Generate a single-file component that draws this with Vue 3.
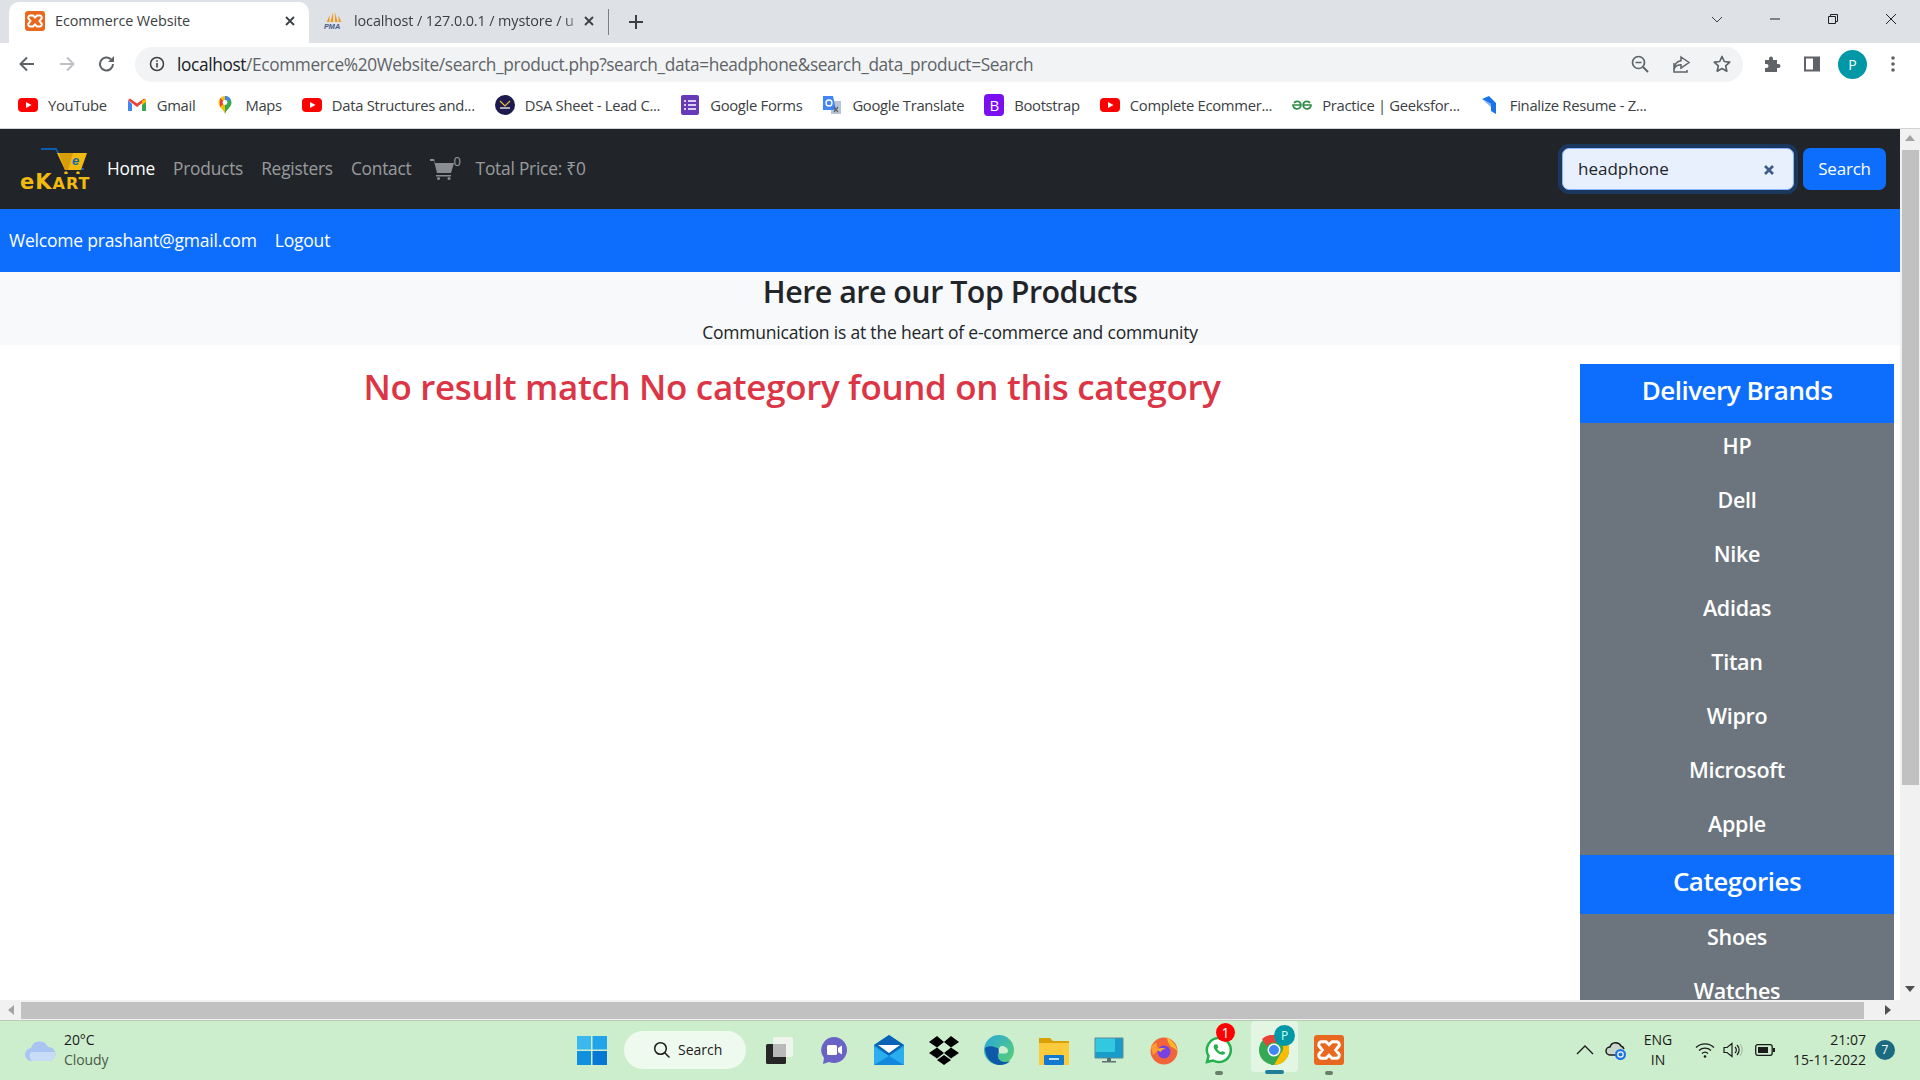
<script setup>
const brands = ['HP', 'Dell', 'Nike', 'Adidas', 'Titan', 'Wipro', 'Microsoft', 'Apple']
const categories = ['Shoes', 'Watches']
const bookmarks = [
  { icon: 'yt', label: 'YouTube' },
  { icon: 'gmail', label: 'Gmail' },
  { icon: 'maps', label: 'Maps' },
  { icon: 'yt', label: 'Data Structures and...' },
  { icon: 'dsa', label: 'DSA Sheet - Lead C...' },
  { icon: 'forms', label: 'Google Forms' },
  { icon: 'translate', label: 'Google Translate' },
  { icon: 'bs', label: 'Bootstrap' },
  { icon: 'yt', label: 'Complete Ecommer...' },
  { icon: 'gfg', label: 'Practice | Geeksfor...' },
  { icon: 'resume', label: 'Finalize Resume - Z...' }
]
const navLinks = ['Products', 'Registers', 'Contact']
</script>

<template>
  <div class="screen">
    <div class="tabstrip">
      <div class="tab active">
        <svg class="fav" viewBox="0 0 20 20"><rect width="20" height="20" rx="3" fill="#e8681f"/><path d="M5 4.5h3l2 2 2-2h3a2 2 0 0 1 1 3.6L14.5 10l1.500 1.900a2 2 0 0 1-1 3.600h-3l-2-2-2 2H5a2 2 0 0 1-1-3.600L5.500 10 4 8.100A2 2 0 0 1 5 4.500z" fill="none" stroke="#fff" stroke-width="2"/></svg>
        <span class="tab-title">Ecommerce Website</span>
        <svg class="tab-x" viewBox="0 0 12 12"><path d="M2 2l8 8M10 2l-8 8" stroke="#3c4043" stroke-width="1.800"/></svg>
      </div>
      <div class="tab inactive">
        <svg class="fav" viewBox="0 0 22 22"><path d="M10 1 7 12h3zM12 1l3 11h-3zM6 5 3 12h3zM16 5l3 7h-3z" fill="#f29a1f"/><text x="0" y="20" font-size="8" font-style="italic" font-weight="700" fill="#4a5a8a" font-family="Liberation Sans">PMA</text></svg>
        <span class="tab-title faded">localhost / 127.0.0.1 / mystore / u</span>
        <svg class="tab-x" viewBox="0 0 12 12"><path d="M2 2l8 8M10 2l-8 8" stroke="#3c4043" stroke-width="1.800"/></svg>
      </div>
      <div class="tab-sep"></div>
      <svg class="plus" viewBox="0 0 16 16"><path d="M8 1v14M1 8h14" stroke="#3c4043" stroke-width="2"/></svg>
      <div class="win-controls">
        <svg class="win" viewBox="0 0 12 12"><path d="M1 4l5 5 5-5" fill="none" stroke="#3c4043"/></svg>
        <svg class="win" viewBox="0 0 12 12"><path d="M1 6h10" stroke="#202124" stroke-width="1"/></svg>
        <svg class="win" viewBox="0 0 12 12"><path d="M1.500 3.500h7v7h-7zM3.500 3.500v-2h7v7h-2" fill="none" stroke="#202124"/></svg>
        <svg class="win" viewBox="0 0 12 12"><path d="M1 1l10 10M11 1 1 11" stroke="#202124"/></svg>
      </div>
    </div>

    <div class="toolbar">
      <svg class="tb back" viewBox="0 0 20 20"><path d="M17 10H4M10 3.500 3.500 10l6.500 6.500" fill="none" stroke="#5f6368" stroke-width="2"/></svg>
      <svg class="tb fwd" viewBox="0 0 20 20"><path d="M3 10h13M10 3.500l6.500 6.500-6.500 6.500" fill="none" stroke="#bdc1c6" stroke-width="2"/></svg>
      <svg class="tb" viewBox="0 0 20 20"><path d="M16 10a6.500 6.500 0 1 1-2-4.700" fill="none" stroke="#5f6368" stroke-width="2"/><path d="M17 2v6h-6z" fill="#5f6368"/></svg>
      <div class="omnibox">
        <svg class="info" viewBox="0 0 16 16"><circle cx="8" cy="8" r="6.500" fill="none" stroke="#3c4043" stroke-width="1.500"/><path d="M8 7v4.500M8 4.300v1.500" stroke="#3c4043" stroke-width="1.600"/></svg>
        <div class="url"><span class="host">localhost</span>/Ecommerce%20Website/search_product.php?search_data=headphone&amp;search_data_product=Search</div>
        <div class="omni-actions">
          <svg class="om" viewBox="0 0 20 20"><circle cx="8.500" cy="8.500" r="6" fill="none" stroke="#5f6368" stroke-width="1.700"/><path d="M13 13l5 5" stroke="#5f6368" stroke-width="2"/><path d="M5.500 8.500h6" stroke="#5f6368" stroke-width="1.500"/></svg>
          <svg class="om" viewBox="0 0 20 20"><path d="M10 3v0l8 5.500-8 5.500v-3.200c-3 0-5 1-6.500 3.200.3-4 2.700-6.800 6.500-7.300z" fill="none" stroke="#5f6368" stroke-width="1.500"/><path d="M3 9v9h13v-2" fill="none" stroke="#5f6368" stroke-width="1.500"/></svg>
          <svg class="om" viewBox="0 0 20 20"><path d="M10 2.500l2.300 5 5.400.6-4 3.700 1.100 5.400L10 14.500l-4.800 2.700 1.100-5.400-4-3.700 5.400-.6z" fill="none" stroke="#5f6368" stroke-width="1.700" stroke-linejoin="round"/></svg>
        </div>
      </div>
      <div class="ext-actions">
        <svg class="om" viewBox="0 0 20 20"><path d="M3 6h4V4.500a2 2 0 0 1 4 0V6h4v4h1.500a2 2 0 0 1 0 4H15v4H3v-4h1.500a2 2 0 0 0 0-4H3z" fill="#5f6368"/></svg>
        <svg class="om" viewBox="0 0 20 20"><path d="M3 3.500h14v13H3z" fill="none" stroke="#5f6368" stroke-width="2"/><path d="M11 4h6v12h-6z" fill="#5f6368"/></svg>
        <div class="avatar">P</div>
        <svg class="om" viewBox="0 0 20 20"><circle cx="10" cy="4" r="1.800" fill="#5f6368"/><circle cx="10" cy="10" r="1.800" fill="#5f6368"/><circle cx="10" cy="16" r="1.800" fill="#5f6368"/></svg>
      </div>
    </div>

    <div class="bookmarks">
      <div v-for="b in bookmarks" :key="b.label" class="bookmark">
        <svg v-if="b.icon === 'yt'" class="bm-ic" viewBox="0 0 20 20"><rect x="0" y="3" width="20" height="14" rx="4" fill="#f00"/><path d="M8 7l5.500 3L8 13z" fill="#fff"/></svg>
        <svg v-else-if="b.icon === 'gmail'" class="bm-ic" viewBox="0 0 20 20"><path d="M1 5v11h4V9z" fill="#4285f4"/><path d="M19 5v11h-4V9z" fill="#34a853"/><path d="M1 5l9 7 9-7-2-1.500-7 5-7-5z" fill="#ea4335"/><path d="M15 5.500 19 4v3l-4 3z" fill="#fbbc04"/></svg>
        <svg v-else-if="b.icon === 'maps'" class="bm-ic" viewBox="0 0 20 20"><path d="M10 1a6.500 6.500 0 0 0-6.500 6.500c0 4.500 4.500 6 6.500 11.500z" fill="#fbbc04"/><path d="M10 1a6.500 6.500 0 0 1 6.500 6.500c0 4.500-4.500 6-6.500 11.500z" fill="#34a853"/><path d="M5 3 10 7.500 5 12z" fill="#ea4335"/><path d="M10 1a6.500 6.500 0 0 1 5.500 3L10 7.500z" fill="#4285f4"/><circle cx="10" cy="7.500" r="2.400" fill="#fff"/></svg>
        <svg v-else-if="b.icon === 'dsa'" class="bm-ic" viewBox="0 0 20 20"><circle cx="10" cy="10" r="10" fill="#1e1a4e"/><path d="M5 6l5 5 5-5" fill="none" stroke="#f0c040" stroke-width="1.200"/><path d="M5 13h10" stroke="#ddd" stroke-width="1.500"/></svg>
        <svg v-else-if="b.icon === 'forms'" class="bm-ic" viewBox="0 0 20 20"><rect x="1" y="0" width="18" height="20" rx="2" fill="#673ab7"/><path d="M8 6h8M8 10h8M8 14h8M4 6h2M4 10h2M4 14h2" stroke="#fff" stroke-width="1.500"/></svg>
        <svg v-else-if="b.icon === 'translate'" class="bm-ic" viewBox="0 0 20 20"><path d="M9 6h10v13H9z" fill="#b9c4d6"/><path d="M1 1h10l3 14H1z" fill="#4285f4"/><circle cx="7" cy="8" r="3" fill="none" stroke="#fff" stroke-width="1.400"/><path d="M12 12l4 5M16 12l-4 5" stroke="#5f6368" stroke-width="1.300"/></svg>
        <div v-else-if="b.icon === 'bs'" class="bs-ic">B</div>
        <svg v-else-if="b.icon === 'gfg'" class="bm-ic" viewBox="0 0 20 20"><path d="M9 10H1a4 4 0 0 0 7 2.500c1-1.300 1-3.500 0-5A4 4 0 0 0 2 8M11 10h8a4 4 0 0 1-7 2.500c-1-1.300-1-3.500 0-5A4 4 0 0 1 18 8" fill="none" stroke="#2f8d46" stroke-width="1.700"/></svg>
        <svg v-else class="bm-ic" viewBox="0 0 20 20"><path d="M2 4l7-3 7 7v11l-5-3V9z" fill="#1a73e8"/><path d="M2 4l9 5v3z" fill="#7cb3f5"/></svg>
        <span class="bm-label">{{ b.label }}</span>
      </div>
    </div>

    <div class="viewport">
      <div class="page">
        <nav class="navbar">
          <div class="logo">
            <svg class="logo-cart" viewBox="0 0 46 26"><path d="M0 1h15l10 20h18" fill="none" stroke="#0b5cab" stroke-width="1.800"/><path d="M16 5h30l-6 17H24z" fill="#f2b90f"/><path d="M18 5h14l-5 17h-3z" fill="#d79c08"/><text x="31" y="17" font-size="13" font-weight="700" font-style="italic" fill="#0f6ab0" font-family="Liberation Sans">e</text><circle cx="25" cy="25" r="1.800" fill="#f2b90f"/><circle cx="37" cy="25" r="1.800" fill="#f2b90f"/></svg>
            <div class="logo-text">eK<span class="logo-small">ART</span></div>
          </div>
          <a class="nav-link current">Home</a>
          <a v-for="l in navLinks" :key="l" class="nav-link">{{ l }}</a>
          <a class="nav-link cart">
            <svg class="cart-ic" viewBox="0 0 24 22"><path d="M0 1h4l1 4h19l-3 10H7L4 3H0z" fill="#8b8d90"/><path d="M6 17h15v1.500H6z" fill="#8b8d90"/><circle cx="8.500" cy="20.500" r="1.500" fill="#8b8d90"/><circle cx="19" cy="20.500" r="1.500" fill="#8b8d90"/></svg><sup>0</sup>
          </a>
          <a class="nav-link">Total Price: ₹0</a>
          <form class="search" @submit.prevent>
            <div class="search-box">
              <input class="search-input" type="text" value="headphone" readonly />
              <svg class="clear" viewBox="0 0 12 12"><path d="M2 2l8 8M10 2l-8 8" stroke="#3d5c8c" stroke-width="2.600"/></svg>
            </div>
            <button class="search-btn" type="button">Search</button>
          </form>
        </nav>

        <div class="welcome">
          <a>Welcome prashant@gmail.com</a>
          <a>Logout</a>
        </div>

        <div class="hero">
          <h3>Here are our Top Products</h3>
          <p>Communication is at the heart of e-commerce and community</p>
        </div>

        <div class="columns">
          <div class="results">
            <h2>No result match No category found on this category</h2>
          </div>
          <aside class="sidebar">
            <div class="side-head">Delivery Brands</div>
            <div v-for="b in brands" :key="b" class="side-item">{{ b }}</div>
            <div class="side-head">Categories</div>
            <div v-for="c in categories" :key="c" class="side-item">{{ c }}</div>
          </aside>
        </div>
      </div>
      <div class="vscroll">
        <div class="arrow up"></div>
        <div class="vthumb"></div>
        <div class="vspace"></div>
        <div class="arrow down"></div>
      </div>
    </div>

    <div class="hscroll">
      <div class="harrow"><div class="arrow left"></div></div>
      <div class="hthumb"></div>
      <div class="harrow wide"><div class="arrow right"></div></div>
      <div class="corner"></div>
    </div>

    <div class="taskbar">
      <div class="weather">
        <svg class="cloud" viewBox="0 0 32 26"><path d="M8 24a6.500 6.500 0 0 1-1-13 9 9 0 0 1 17-1 7 7 0 0 1 1 14z" fill="#a9c4f2"/><path d="M8 24a6.500 6.500 0 0 1-1-9h24a7 7 0 0 1-6 9z" fill="#c9dcf7"/></svg>
        <div class="weather-text">
          <div class="temp">20°C</div>
          <div class="cond">Cloudy</div>
        </div>
      </div>
      <div class="task-center">
        <svg class="ti win11" viewBox="0 0 30 30"><path d="M0 1h14v13.500H0z" fill="#3bb8f0"/><path d="M15.500 1H30v13.500H15.500z" fill="#22a4e8"/><path d="M0 16h14v14H0z" fill="#1190e0"/><path d="M15.500 16H30v14H15.500z" fill="#0678d4"/></svg>
        <div class="task-search">
          <svg class="ts-ic" viewBox="0 0 18 18"><circle cx="7.500" cy="7.500" r="5.800" fill="none" stroke="#1b1b1b" stroke-width="1.500"/><path d="M11.500 11.500l5 5" stroke="#1b1b1b" stroke-width="1.500"/></svg>
          <span>Search</span>
        </div>
        <svg class="ti taskview" viewBox="0 0 30 30"><rect x="2" y="9" width="20" height="20" rx="1.500" fill="#262626"/><rect x="9" y="2" width="20" height="20" rx="1.500" fill="#f2f6f2" opacity=".85"/><rect x="9" y="9" width="13" height="13" fill="#b9b9b9"/></svg>
        <svg class="ti" viewBox="0 0 30 30"><path d="M15 2a13 13 0 1 1-5 25l-6 2 1-6A13 13 0 0 1 15 2z" fill="#6a63c6"/><rect x="8" y="10" width="10" height="10" rx="1.500" fill="#fff"/><path d="M19 13l4-2.500v9L19 17z" fill="#fff"/></svg>
        <svg class="ti" viewBox="0 0 30 30"><path d="M0 10 15 0l15 10v20H0z" fill="#1b9de8"/><path d="M0 10 15 0l15 10-15 11z" fill="#0a63b5"/><path d="M4 10h22l-11 8z" fill="#fff"/><path d="M0 12l15 9 15-9v18H0z" fill="#2aaef0"/><path d="M0 30l15-9 15 9z" fill="#1287dc"/></svg>
        <svg class="ti" viewBox="0 0 30 30"><path d="M8 1 0 7l8 5.500L15 7zM22 1l-7 6 7 5.500L30 7zM0 18l8-5.500 7 5.500-7 5.500zM30 18l-8-5.500L15 18l7 5.500zM8 25l7-5 7 5-7 5z" fill="#000"/></svg>
        <svg class="ti" viewBox="0 0 30 30"><defs><linearGradient id="edgeA" x1="0" y1="0" x2="1" y2="1"><stop offset="0" stop-color="#2ba6dd"/><stop offset="1" stop-color="#59d36e"/></linearGradient></defs><circle cx="15" cy="15" r="15" fill="url(#edgeA)"/><path d="M1 13c0 10 7 17 15 17 4 0 8-1.500 10-4-5 2-11 1-12-4-.8-3.500 1-5 3-5.500C15 12 5 9 1 13z" fill="#0f5aa8"/><path d="M17 11c4 0 7 2 7 5 0 1.500-1.500 2.500-3 2.500h-6c-1-4 0-6 2-7.500z" fill="#cdeecd"/></svg>
        <svg class="ti" viewBox="0 0 30 30"><path d="M0 3h11l3 3h16v5H0z" fill="#d8a000"/><path d="M0 8h30v22H0z" fill="#fccb3c"/><rect x="5" y="20" width="20" height="10" rx="1" fill="#1279d0"/><path d="M10 24h10" stroke="#fff" stroke-width="1.500"/></svg>
        <svg class="ti" viewBox="0 0 30 30"><rect x="1" y="3" width="28" height="20" rx="1" fill="#1a9cc9"/><rect x="1" y="3" width="20" height="14" fill="#32c9e0"/><path d="M1 3h28v20H1z" fill="none" stroke="#5a8a9a"/><path d="M13 23h4v3h-4zM8 26h14v1.500H8z" fill="#5e6e72"/></svg>
        <svg class="ti" viewBox="0 0 30 30"><circle cx="15" cy="16" r="13.500" fill="#f2653a"/><path d="M18 2c4 3 10 8 10 14-2-2-4-4-6-4-2-3-4-6-4-10z" fill="#fcb92c"/><path d="M2 12c2-3 4-4 6-4-1 3 0 5 3 6L4 20z" fill="#ff9a30"/><circle cx="15" cy="17" r="6.500" fill="#7542e5"/><path d="M8 15c2-2 5-3 9-1-3 0-5 1-5 3z" fill="#ffb020"/></svg>
        <div class="ti-wrap">
          <svg class="ti" viewBox="0 0 30 30"><path d="M15 3a12 12 0 1 1-6 22.500L3 27l1.500-6A12 12 0 0 1 15 3z" fill="#fff" stroke="#22b14c" stroke-width="2.500"/><path d="M10.500 9.500c-1 1-1.500 3 .5 5.500 2 3 5 4.800 7.500 4.800 1.500 0 2.500-1 2.800-2.300l-3-1.500-1.300 1.300c-1.500-.5-3.300-2.300-3.800-3.800l1.200-1.300-1.400-3z" fill="#22b14c"/></svg>
          <div class="wa-badge">1</div>
          <div class="dot"></div>
        </div>
        <div class="ti-wrap active-app">
          <svg class="ti" viewBox="0 0 30 30"><circle cx="15" cy="15" r="15" fill="#34a853"/><path d="M15 0a15 15 0 0 1 13 7.500H15a7.500 7.500 0 0 0-7 4L3 4A15 15 0 0 1 15 0z" fill="#ea4335"/><path d="M28 7.500A15 15 0 0 1 15 30l7-12a7.500 7.500 0 0 0 0-10.500z" fill="#fbbc04"/><circle cx="15" cy="15" r="6.500" fill="#fff"/><circle cx="15" cy="15" r="5" fill="#4285f4"/></svg>
          <div class="chrome-badge">P</div>
          <div class="bar"></div>
        </div>
        <div class="ti-wrap">
          <svg class="ti" viewBox="0 0 20 20"><rect width="20" height="20" rx="2" fill="#e8681f"/><path d="M5 4.500h3l2 2 2-2h3a2 2 0 0 1 1 3.600L14.500 10l1.500 1.900a2 2 0 0 1-1 3.600h-3l-2-2-2 2H5a2 2 0 0 1-1-3.600L5.500 10 4 8.100A2 2 0 0 1 5 4.500z" fill="none" stroke="#fff" stroke-width="2"/></svg>
          <div class="dot"></div>
        </div>
      </div>
      <div class="tray">
        <svg class="chev" viewBox="0 0 18 10"><path d="M1 9l8-8 8 8" fill="none" stroke="#1b1b1b" stroke-width="1.300"/></svg>
        <svg class="od" viewBox="0 0 22 20"><path d="M5 15a4 4 0 0 1 0-8 6 6 0 0 1 11-1 4.500 4.500 0 0 1 3 3" fill="#c9d6c9" stroke="#1b1b1b" stroke-width="1.500"/><path d="M5 15h8" stroke="#1b1b1b" stroke-width="1.500"/><circle cx="15.500" cy="14.500" r="5.500" fill="#1a73e8"/><circle cx="15.500" cy="14.500" r="2.700" fill="none" stroke="#fff" stroke-width="1.200"/></svg>
        <div class="lang"><div>ENG</div><div>IN</div></div>
        <svg class="wifi" viewBox="0 0 20 16"><path d="M1 5.500a13 13 0 0 1 18 0M4 8.500a9 9 0 0 1 12 0M7 11.500a4.500 4.500 0 0 1 6 0" fill="none" stroke="#1b1b1b" stroke-width="1.300"/><circle cx="10" cy="14.500" r="1.300" fill="#1b1b1b"/></svg>
        <svg class="vol" viewBox="0 0 20 16"><path d="M1 5.500h3L9 1.500v13L4 10.500H1z" fill="none" stroke="#1b1b1b" stroke-width="1.200"/><path d="M12 5a4 4 0 0 1 0 6M14 3a7 7 0 0 1 0 10" fill="none" stroke="#1b1b1b" stroke-width="1.200"/><path d="M17 2a10 10 0 0 1 0 12" fill="none" stroke="#9db59d" stroke-width="1"/></svg>
        <svg class="batt" viewBox="0 0 20 12"><rect x=".7" y=".7" width="16.500" height="10.600" rx="2" fill="none" stroke="#1b1b1b" stroke-width="1.300"/><rect x="3" y="3" width="10" height="6" fill="#1b1b1b"/><rect x="18" y="4" width="2" height="4" fill="#1b1b1b"/></svg>
        <div class="clock"><div>21:07</div><div>15-11-2022</div></div>
        <div class="notif">7</div>
      </div>
    </div>
  </div>
</template>

<style>
html, body { margin: 0; overflow: hidden; }
</style>

<style scoped>
.screen { width: 1920px; height: 1080px; display: flex; flex-direction: column; overflow: hidden; background: #fff; font-family: "Open Sans", "Noto Sans", sans-serif; color: #212529; }

.tabstrip { height: 43px; flex: none; background: #dee1e6; display: flex; align-items: center; padding-left: 9px; box-sizing: border-box; }
.tab { height: 43px; display: flex; align-items: center; box-sizing: border-box; font-size: 14.400px; }
.tab.active { width: 300px; height: 41px; align-self: flex-end; background: #fff; border-radius: 10px 10px 0 0; padding: 0 13px 4px 16px; }
.tab.inactive { width: 299px; padding: 0 13px 2px 15px; }
.fav { width: 20px; height: 20px; flex: none; }
.tab-title { margin-left: 10px; flex: 1; white-space: nowrap; overflow: hidden; color: #3c4043; letter-spacing: -.1px; }
.tab-title.faded { -webkit-mask-image: linear-gradient(to right, #000 92%, transparent); mask-image: linear-gradient(to right, #000 92%, transparent); }
.tab-x { width: 12px; height: 12px; flex: none; }
.tab-sep { width: 1px; height: 26px; background: #7b7e82; }
.plus { width: 16px; height: 16px; margin-left: 19px; }
.win-controls { margin-left: auto; display: flex; gap: 46px; padding-right: 23px; margin-top: -6px; }
.win { width: 12px; height: 12px; }

.toolbar { height: 42px; flex: none; display: flex; align-items: center; padding-left: 17px; box-sizing: border-box; gap: 20px; background: #fff; }
.tb { width: 20px; height: 20px; flex: none; }
.omnibox { width: 1608px; height: 35px; margin-left: -2px; border-radius: 18px; background: #f1f3f4; display: flex; align-items: center; padding: 0 11px 0 14px; box-sizing: border-box; }
.info { width: 16px; height: 16px; flex: none; }
.url { margin-left: 12px; font-size: 17.270px; color: #5f6368; white-space: nowrap; letter-spacing: -.36px; }
.host { color: #202124; }
.omni-actions { margin-left: auto; display: flex; gap: 21px; }
.om { width: 20px; height: 20px; flex: none; }
.ext-actions { display: flex; align-items: center; gap: 20px; margin-left: -1px; }
.avatar { width: 29px; height: 29px; border-radius: 50%; background: #0097a7; color: #fff; font-size: 14px; display: flex; align-items: center; justify-content: center; margin: 0 -4px; }

.bookmarks { height: 44px; flex: none; display: flex; align-items: center; padding: 0 0 4px 18px; gap: 20px; border-bottom: 1px solid #d0d2d5; box-sizing: border-box; background: #fff; }
.bookmark { display: flex; align-items: center; gap: 10px; font-size: 14.800px; color: #3c4043; white-space: nowrap; letter-spacing: -.3px; }
.bm-ic { width: 20px; height: 20px; flex: none; }
.bs-ic { width: 20px; height: 22px; border-radius: 4px; background: #7a10f0; color: #fff; font-size: 15px; text-align: center; line-height: 22px; }

.viewport { height: 871px; flex: none; display: flex; }
.page { width: 1900px; flex: none; display: flex; flex-direction: column; overflow: hidden; }

.navbar { height: 80px; flex: none; background: #212529; display: flex; align-items: center; padding: 0 14px 0 20px; box-sizing: border-box; gap: 18px; }
.logo { width: 72px; display: flex; flex-direction: column; align-items: flex-start; margin-right: -3px; margin-top: 2px; }
.logo-cart { width: 46px; height: 26px; margin-left: 21px; }
.logo-text { font-family: "DejaVu Sans", sans-serif; font-weight: 700; font-size: 21px; line-height: 17px; color: #f2b90f; white-space: nowrap; letter-spacing: 1px; }
.logo-small { font-size: 16px; }
.nav-link { font-size: 17.300px; color: rgba(255, 255, 255, .55); white-space: nowrap; letter-spacing: -.2px; margin-bottom: 2px; }
.nav-link.current { color: #fff; }
.nav-link.cart { display: flex; align-items: flex-start; width: 28px; }
.cart-ic { width: 24px; height: 22px; margin-top: 2px; flex: none; }
.cart sup { font-size: 13px; line-height: 13px; margin-top: -1px; }
.search { margin-left: auto; display: flex; gap: 9px; }
.search-box { position: relative; width: 232px; height: 42px; }
.search-input { width: 100%; height: 100%; box-sizing: border-box; border: 1px solid #86b7fe; border-radius: 7px; background: #e8f0fe; box-shadow: 0 0 0 4px rgba(13, 110, 253, .25); padding: 0 40px 2px 15px; font: inherit; font-size: 17px; color: #212529; outline: none; }
.clear { position: absolute; right: 19px; top: 16px; width: 12px; height: 12px; }
.search-btn { width: 83px; height: 42px; border: 0; border-radius: 7px; background: #0d6efd; color: #fff; font: inherit; font-size: 17px; letter-spacing: -.2px; padding: 0 0 2px; }

.welcome { height: 63px; flex: none; background: #0d6efd; color: #fff; display: flex; align-items: center; gap: 18px; padding: 0 0 2px 9px; box-sizing: border-box; font-size: 17.500px; letter-spacing: -.2px; }
.hero { height: 73px; flex: none; background: #f8f9fa; text-align: center; box-sizing: border-box; padding-top: 1px; }
.hero h3 { margin: 0; font-size: 30.400px; line-height: 38px; font-weight: 600; letter-spacing: -.5px; }
.hero p { margin: 8px 0 0; font-size: 17.500px; line-height: 26px; letter-spacing: -.2px; }

.columns { flex: 1; min-height: 0; display: flex; gap: 0; padding-right: 6px; overflow: hidden; }
.results { width: 1580px; flex: none; text-align: center; padding-top: 18px; padding-left: 4px; box-sizing: border-box; }
.results h2 { margin: 0; color: #dc3545; font-size: 34.900px; line-height: 48px; font-weight: 600; letter-spacing: -.3px; }
.sidebar { width: 314px; flex: none; margin-top: 19px; background: #6c757d; color: #fff; text-align: center; }
.side-head { height: 59px; line-height: 52px; background: #0d6efd; font-size: 26px; font-weight: 600; letter-spacing: -.5px; }
.side-item { height: 54px; line-height: 46px; font-size: 21.500px; font-weight: 600; letter-spacing: -.3px; }

.vscroll { width: 20px; flex: none; background: #f1f1f1; display: flex; flex-direction: column; align-items: center; }
.vthumb { width: 17px; height: 635px; background: #c1c1c1; margin-top: 3px; flex: none; }
.vspace { flex: 1; }
.arrow { width: 0; height: 0; border-style: solid; border-color: transparent; flex: none; }
.arrow.up { margin-top: 6px; border-width: 0 5px 6px; border-bottom-color: #a3a3a3; margin-bottom: 6px; }
.arrow.down { margin-bottom: 8px; border-width: 6px 5px 0; border-top-color: #505050; }

.hscroll { height: 20px; flex: none; display: flex; background: #f1f1f1; }
.harrow { width: 21px; display: flex; align-items: center; justify-content: center; }
.harrow.wide { width: 36px; justify-content: flex-end; padding-right: 9px; box-sizing: border-box; }
.hthumb { width: 1843px; height: 17px; margin-top: 2px; background: #c1c1c1; }
.arrow.left { border-width: 5px 6px 5px 0; border-right-color: #a3a3a3; }
.arrow.right { border-width: 5px 0 5px 6px; border-left-color: #505050; }
.corner { width: 20px; }

.taskbar { height: 60px; flex: none; background: #cdeecd; border-top: 1px solid #b7cdb7; box-sizing: border-box; display: flex; align-items: center; padding-bottom: 2px; }
.weather { width: 578px; flex: none; display: flex; align-items: center; padding-left: 24px; gap: 8px; box-sizing: border-box; }
.cloud { width: 32px; height: 26px; }
.weather-text { font-size: 14px; line-height: 20px; letter-spacing: -.1px; }
.temp { color: #1b1b1b; }
.cond { color: #4a5a4a; }
.task-center { display: flex; align-items: center; gap: 25px; width: 780px; flex: none; }
.ti { width: 30px; height: 30px; flex: none; display: block; }
.win11 { margin-right: -8px; margin-left: -1px; }
.taskview { margin-left: 1px; }
.task-search { width: 122px; height: 38px; border-radius: 19px; background: #effaef; display: flex; align-items: center; gap: 7px; padding-left: 29px; box-sizing: border-box; font-size: 14px; color: #1b1b1b; margin-right: -8px; }
.ts-ic { width: 18px; height: 18px; flex: none; }
.ti-wrap { position: relative; width: 30px; height: 30px; flex: none; }
.wa-badge { position: absolute; left: 12px; top: -12px; width: 19px; height: 19px; border-radius: 50%; background: #f00; color: #fff; font-size: 14px; line-height: 19px; text-align: center; }
.chrome-badge { position: absolute; left: 15px; top: -10px; width: 21px; height: 21px; border-radius: 50%; background: #0097a7; color: #cfe; font-size: 12px; line-height: 21px; text-align: center; z-index: 1; }
.dot { position: absolute; left: 11px; top: 36px; width: 8px; height: 4px; border-radius: 2px; background: #6a7f6a; }
.active-app::before { content: ""; position: absolute; left: -8px; top: -14px; width: 47px; height: 51px; border-radius: 4px; background: rgba(255, 255, 255, .45); }
.active-app .ti { z-index: 1; position: relative; }
.bar { position: absolute; left: 6px; top: 35px; width: 19px; height: 4px; border-radius: 2px; background: #1f7f96; z-index: 1; }
.tray { flex: 1; display: flex; align-items: center; color: #1b1b1b; font-size: 14px; }
.chev { width: 18px; height: 10px; margin-left: 218px; }
.od { width: 22px; height: 20px; margin-left: 11px; }
.lang { margin-left: 16px; text-align: center; line-height: 20px; width: 30px; }
.wifi { width: 20px; height: 16px; margin-left: 22px; }
.vol { width: 20px; height: 16px; margin-left: 8px; }
.batt { width: 20px; height: 12px; margin-left: 12px; }
.clock { margin-left: auto; text-align: right; line-height: 20px; }
.notif { width: 20px; height: 20px; border-radius: 50%; background: #1a6b80; color: #fff; font-size: 12px; line-height: 20px; text-align: center; margin: 0 25px 0 9px; }
</style>
